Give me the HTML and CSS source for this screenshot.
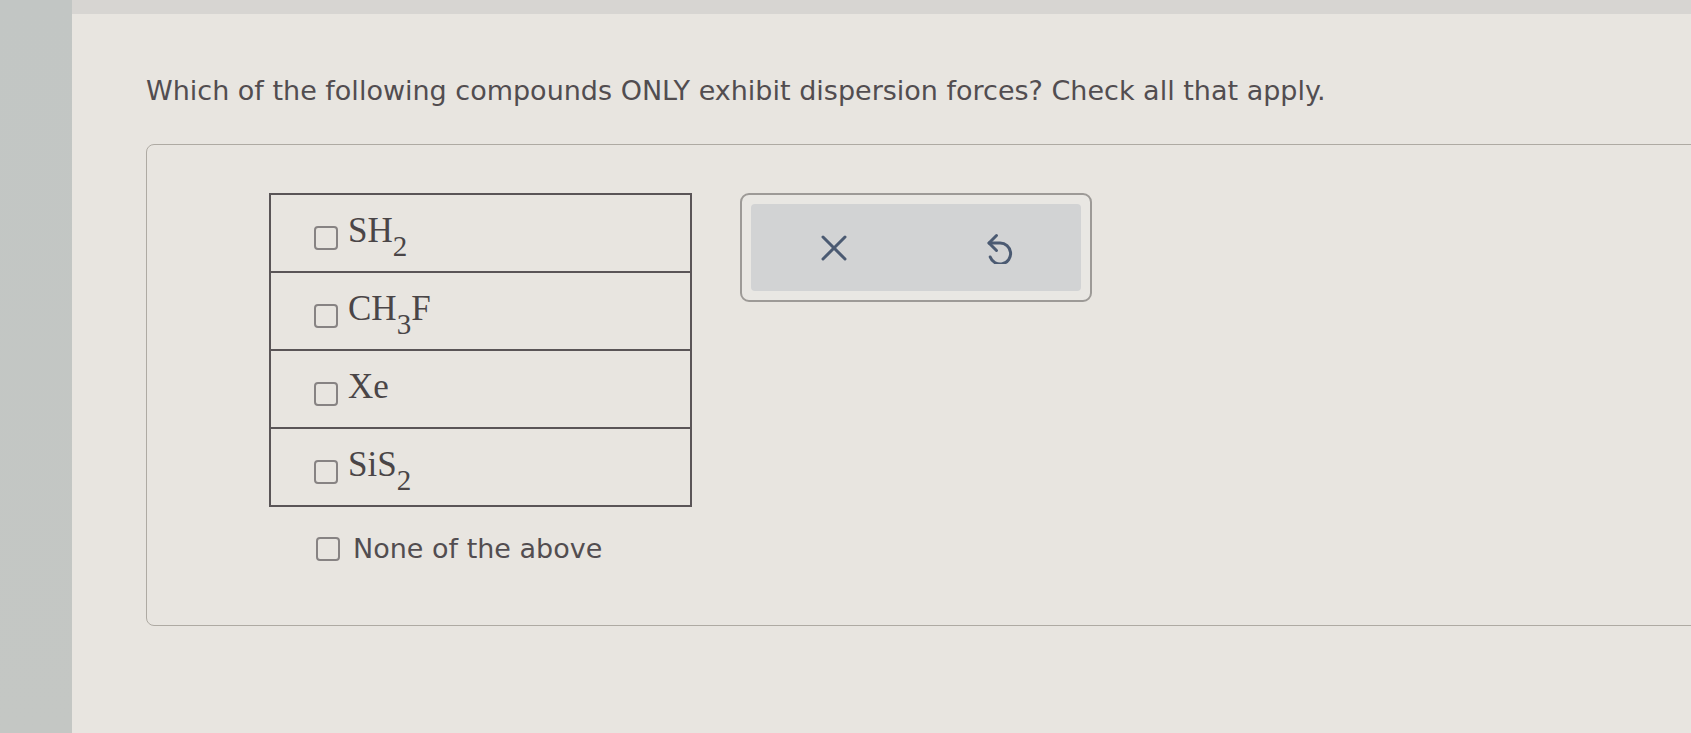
FILE: index.html
```html
<!DOCTYPE html>
<html>
<head>
<meta charset="utf-8">
<link rel="stylesheet" href="styles.css">
</head>
<body>
<div class="side"></div>
<div class="main">
  <div class="topband"></div>
  <p class="question">Which of the following compounds ONLY exhibit dispersion forces? Check all that apply.</p>
  <div class="panel">
    <div class="answers">
      <div class="table">
        <div class="row"><span class="box"></span><span class="chem">SH<sub>2</sub></span></div>
        <div class="row"><span class="box"></span><span class="chem">CH<sub>3</sub>F</span></div>
        <div class="row"><span class="box"></span><span class="chem">Xe</span></div>
        <div class="row"><span class="box"></span><span class="chem">SiS<sub>2</sub></span></div>
      </div>
      <div class="none"><span class="box"></span><span class="none-text">None of the above</span></div>
    </div>
    <div class="tools">
      <div class="tools-inner">
        <div class="tool">
          <svg width="26" height="26" viewBox="0 0 26 26"><path d="M2 2 L24 24 M24 2 L2 24" fill="none" stroke="#4b5a72" stroke-width="3" stroke-linecap="round"/></svg>
        </div>
        <div class="tool">
          <svg width="28" height="32" viewBox="0 0 28 32"><path d="M4 11 H15 A10.5 10.5 0 1 1 5.2 25" fill="none" stroke="#4b5a72" stroke-width="3" stroke-linecap="round"/><path d="M11.5 3.5 L4 11 L11.5 18.5" fill="none" stroke="#4b5a72" stroke-width="3" stroke-linecap="round" stroke-linejoin="round"/></svg>
        </div>
      </div>
    </div>
  </div>
</div>
</body>
</html>
```
FILE: styles.css
```css
html, body {
  margin: 0;
  padding: 0;
  height: 100%;
}
body {
  display: flex;
  height: 733px;
  overflow: hidden;
  background: #e7e4df;
  font-family: "DejaVu Sans", Verdana, sans-serif;
  color: #524d50;
}
.side {
  width: 72px;
  flex: none;
  background: linear-gradient(180deg, #c2c6c4 0%, #c4c7c4 100%);
}
.main {
  flex: 1;
  min-width: 0;
  background: #e8e5e0;
}
.topband {
  height: 14px;
  background: #d7d5d2;
}
.question {
  margin: 61px 0 0 0;
  padding-left: 74px;
  font-size: 27px;
  line-height: 32px;
  white-space: nowrap;
}
.panel {
  margin: 37px -40px 0 74px;
  height: 482px;
  border: 1.5px solid #aeaaa3;
  border-radius: 8px;
  display: flex;
  align-items: flex-start;
  gap: 48px;
  padding: 48px 0 0 122px;
  box-sizing: border-box;
}
.table {
  width: 423px;
  border: 2px solid #5a5557;
  border-bottom: none;
  box-sizing: border-box;
}
.row {
  height: 78px;
  border-bottom: 2px solid #5a5557;
  box-sizing: border-box;
  display: flex;
  align-items: center;
  padding: 10px 0 0 43px;
}
.box {
  width: 24px;
  height: 24px;
  flex: none;
  box-sizing: border-box;
  border: 2px solid #878383;
  border-radius: 4px;
}
.chem {
  font-family: "Liberation Serif", "Times New Roman", serif;
  font-size: 35px;
  line-height: 35px;
  margin: 0 0 15px 10px;
  color: #4a4547;
}
.chem sub {
  font-size: 29px;
  line-height: 0;
  vertical-align: -14px;
}
.none {
  display: flex;
  align-items: center;
  height: 32px;
  margin-top: 26px;
  padding-left: 47px;
}
.none-text {
  font-size: 27px;
  line-height: 32px;
  margin-left: 13px;
}
.tools {
  width: 352px;
  height: 109px;
  box-sizing: border-box;
  border: 2px solid #9d9a97;
  border-radius: 9px;
  padding: 9px;
  background: #e9e7e3;
}
.tools-inner {
  height: 100%;
  background: #d2d3d4;
  border-radius: 4px;
  display: flex;
}
.tool {
  flex: 1;
  display: flex;
  align-items: center;
  justify-content: center;
}
```
